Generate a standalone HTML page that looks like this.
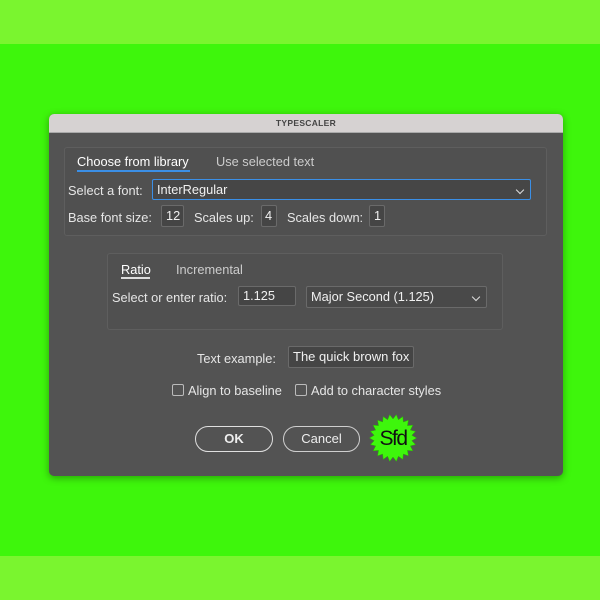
<!DOCTYPE html><html><head><style>
body{margin:0;width:600px;height:600px;position:relative;background:#3ef60c;font-family:"Liberation Sans",sans-serif;overflow:hidden}
.a{position:absolute}
.t{position:absolute;color:#e6e6e6;font-size:12.8px;white-space:nowrap}
.box{position:absolute;background:#454545;border:1px solid #6a6a6a;border-radius:2px;color:#f0f0f0;font-size:12.8px;box-sizing:border-box;padding-left:4px;line-height:19px}
.grp{position:absolute;border:1px solid #5e5e5e;background:#505050;border-radius:3px}
.btn{position:absolute;border:1.5px solid #e0e0e0;border-radius:13px;color:#eee;font-size:13px;font-weight:bold;text-align:center;box-sizing:border-box;line-height:23px}
.cb{position:absolute;width:10px;height:10px;border:1px solid #bbb;border-radius:2px}
.chev{position:absolute;right:7px;top:7px;width:5px;height:5px;border-right:1.3px solid #ddd;border-bottom:1.3px solid #ddd;transform:rotate(45deg)}
</style></head><body>
<div class="a" style="left:0;top:0;width:600px;height:44px;background:#7af52f"></div>
<div class="a" style="left:0;top:556px;width:600px;height:44px;background:#7af52f"></div>
<div class="a" style="left:49px;top:114px;width:514px;height:362px;background:#535353;border-radius:5px;overflow:hidden;box-shadow:0 2px 8px rgba(0,0,0,.35)">
<div class="a" style="left:0;top:0;width:514px;height:18px;background:#d6d2d2;border-bottom:1px solid #aaa;text-align:center;font-size:8.5px;font-weight:bold;color:#444;line-height:18px;letter-spacing:.3px">TYPESCALER</div>
</div>
<div class="grp" style="left:64px;top:147px;width:481px;height:87px"></div>
<div class="t" style="left:77px;top:154px;color:#fff">Choose from library</div>
<div class="a" style="left:77px;top:170px;width:113px;height:2px;background:#3b8fe6"></div>
<div class="t" style="left:216px;top:154px;color:#ccc">Use selected text</div>
<div class="t" style="left:68px;top:183px">Select a font:</div>
<div class="box" style="left:152px;top:179px;width:379px;height:21px;border-color:#3b8fe6;background:#464646">InterRegular<span class="chev"></span></div>
<div class="t" style="left:68px;top:210px">Base font size:</div>
<div class="box" style="left:161px;top:205px;width:23px;height:22px;line-height:20px">12</div>
<div class="t" style="left:194px;top:210px">Scales up:</div>
<div class="box" style="left:261px;top:205px;width:16px;height:22px;padding-left:3px;line-height:20px">4</div>
<div class="t" style="left:287px;top:210px">Scales down:</div>
<div class="box" style="left:369px;top:205px;width:16px;height:22px;padding-left:4px;line-height:20px">1</div>
<div class="grp" style="left:107px;top:253px;width:394px;height:75px"></div>
<div class="t" style="left:121px;top:262px;color:#fff">Ratio</div>
<div class="a" style="left:121px;top:277px;width:29px;height:2px;background:#ddd"></div>
<div class="t" style="left:176px;top:262px;color:#ccc">Incremental</div>
<div class="t" style="left:112px;top:290px">Select or enter ratio:</div>
<div class="box" style="left:238px;top:286px;width:58px;height:20px;line-height:17px">1.125</div>
<div class="box" style="left:306px;top:286px;width:181px;height:22px;background:#494949;line-height:20px">Major Second (1.125)<span class="chev"></span></div>
<div class="t" style="left:197px;top:351px">Text example:</div>
<div class="box" style="left:288px;top:346px;width:126px;height:22px;line-height:20px;font-size:13px">The quick brown fox</div>
<div class="cb" style="left:172px;top:384px"></div>
<div class="t" style="left:188px;top:383px">Align to baseline</div>
<div class="cb" style="left:295px;top:384px"></div>
<div class="t" style="left:311px;top:383px">Add to character styles</div>
<div class="btn" style="left:195px;top:426px;width:78px;height:26px">OK</div>
<div class="btn" style="left:283px;top:426px;width:77px;height:26px;border-color:#cfcfcf;font-weight:normal">Cancel</div>
<svg class="a" style="left:369px;top:414px" width="48" height="48"><polygon id="st" fill="#3ef60c" stroke="#2ab800" stroke-width=".5"/><text x="24" y="31" text-anchor="middle" font-family="Liberation Sans" font-size="21" fill="#111" letter-spacing="-1.5">Sfd</text></svg>
<script>var p=[],n=22;for(var i=0;i<2*n;i++){var r=i%2?19:23.5,a=Math.PI*i/n;p.push((24+r*Math.cos(a)).toFixed(1)+","+(24+r*Math.sin(a)).toFixed(1))}document.getElementById("st").setAttribute("points",p.join(" "));</script>
</body></html>
